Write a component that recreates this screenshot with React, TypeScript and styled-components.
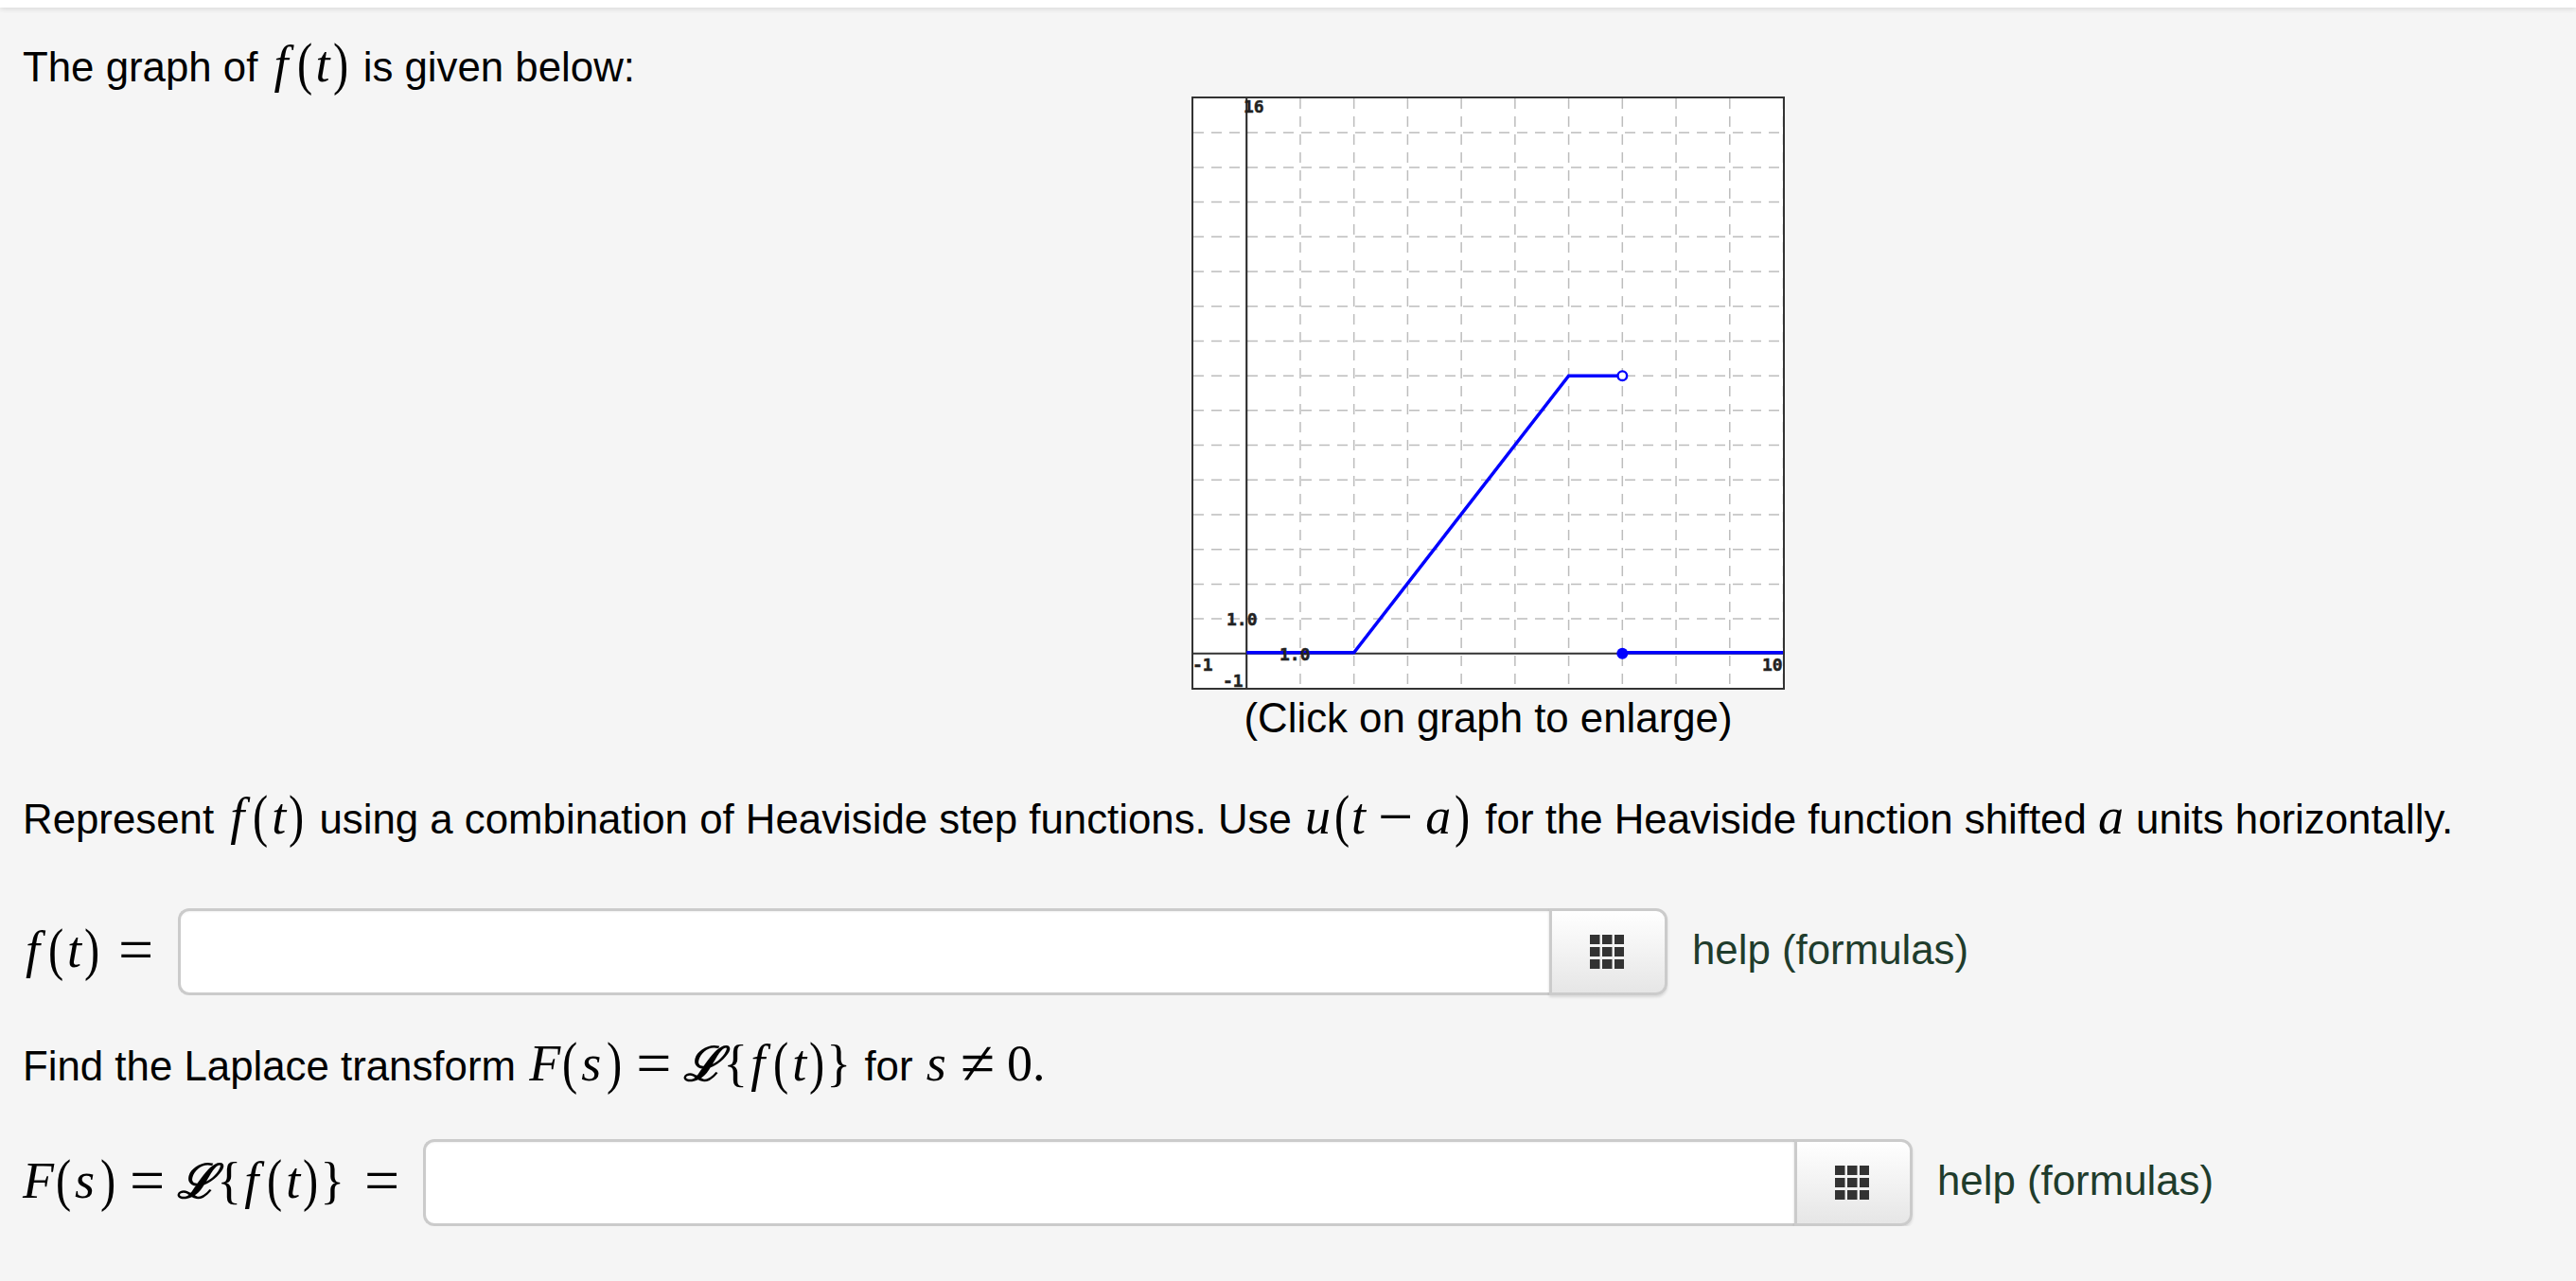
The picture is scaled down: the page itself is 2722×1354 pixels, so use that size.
import React from "react";
import styled, { createGlobalStyle } from "styled-components";

const Global = createGlobalStyle`
  html, body { margin: 0; padding: 0; background: #f5f5f5; }
  body { font-family: "Liberation Sans", Arial, sans-serif; color: #000; overflow: hidden; }
`;
const TopBar = styled.div`
  height: 8px;
  background: #fff;
  box-shadow: 0 2px 5px rgba(0, 0, 0, 0.1);
`;
const Page = styled.main`
  padding: 0 24px;
  font-size: 43.8px;
  line-height: 62px;
`;
const Line = styled.div<{ $top: number }>`
  margin-top: ${(p) => p.$top}px;
  white-space: nowrap;
  height: 62px;
`;
const Math = styled.span<{ $gap?: number }>`
  font-family: "Liberation Serif", "DejaVu Serif", serif;
  font-size: 54px;
  white-space: nowrap;
  margin: 0 ${(p) => p.$gap ?? 2}px;
`;
const Var = styled.i<{ $l?: number; $r?: number }>`
  font-style: italic;
  margin-left: ${(p) => p.$l ?? 0}px;
  margin-right: ${(p) => p.$r ?? 0}px;
`;
const Paren = styled.span`
  display: inline-block;
  margin: 0 1px;
  transform: scaleY(1.12) scaleX(0.9);
  font-weight: 400;
`;
const Brace = styled.span`
  display: inline-block;
`;
const Op = styled.span<{ $l?: number }>`
  font-size: 66px;
  line-height: 40px;
  vertical-align: -4px;
  margin: 0 13px 0 ${(p) => p.$l ?? 13}px;
`;
const Script = styled.span`
  font-family: "DejaVu Serif", serif;
  font-style: italic;
  font-weight: 700;
  font-size: 50px;
  line-height: 40px;
`;
const Figure = styled.figure`
  margin: 3px 0 0 1235px;
  width: 627px;
`;
const Caption = styled.figcaption`
  text-align: center;
  line-height: 62px;
  margin-top: -1px;
`;
const GraphSvg = styled.svg`
  display: block;
`;
const AnswerRow = styled.div<{ $top: number }>`
  display: flex;
  align-items: center;
  margin-top: ${(p) => p.$top}px;
  height: 92px;
`;
const Label = styled.div<{ $w: number }>`
  width: ${(p) => p.$w}px;
  flex: none;
  white-space: nowrap;
  margin-bottom: 2px;
`;
const InputGroup = styled.div`
  display: flex;
  width: 1574px;
  height: 92px;
  flex: none;
`;
const Field = styled.input`
  flex: 1;
  min-width: 0;
  box-sizing: border-box;
  height: 100%;
  background: #fff;
  border: 3px solid #cbcbcb;
  border-right-width: 0;
  border-radius: 12px 0 0 12px;
  box-shadow: inset 0 1px 2px rgba(0, 0, 0, 0.05);
  outline: none;
`;
const PickerButton = styled.button`
  width: 125px;
  box-sizing: border-box;
  height: 100%;
  flex: none;
  display: flex;
  align-items: center;
  justify-content: center;
  padding: 0 4px 0 0;
  border: 3px solid #cbcbcb;
  border-radius: 0 12px 12px 0;
  background: linear-gradient(#fff, #e6e6e6);
  box-shadow: 0 2px 3px rgba(0, 0, 0, 0.12);
`;
const Help = styled.a`
  margin: 0 0 4px 26px;
  color: #1f3c2c;
  white-space: nowrap;
`;

const Icon = () => (
  <svg width="36" height="36" viewBox="0 0 36 36" fill="#333">
    {[0, 13, 26].map((y) =>
      [0, 13, 26].map((x) => <rect key={`${x}-${y}`} x={x} y={y} width="10.5" height="10" />)
    )}
  </svg>
);

const W = 624;
const dx = W / 11;
const dy = W / 17;
const px = (t: number) => (t + 1) * dx + 1.5;
const py = (v: number) => (16 - v) * dy + 1.5;

const Graph = () => (
  <GraphSvg width="627" height="627" viewBox="0 0 627 627">
    <rect x="1.5" y="1.5" width={W} height={W} fill="#fff" />
    <g stroke="#bdbdbd" strokeWidth="1.5" strokeDasharray="11 8">
      {Array.from({ length: 10 }, (_, i) => i + 1).map((t) => (
        <line key={t} x1={px(t)} x2={px(t)} y1="2" y2={W} />
      ))}
      {Array.from({ length: 15 }, (_, i) => i + 1).map((v) => (
        <line key={v} x1="2" x2={W} y1={py(v)} y2={py(v)} />
      ))}
    </g>
    <line x1={px(0)} x2={px(0)} y1="1" y2={W + 2} stroke="#222" strokeWidth="2" />
    <line x1="1" x2={W + 2} y1={py(0)} y2={py(0)} stroke="#333" strokeWidth="2" />
    <rect x="1" y="1" width={W + 1} height={W + 1} fill="none" stroke="#333" strokeWidth="2" />
    <path
      d={`M${px(0)} ${py(0) - 1}H${px(2)}L${px(6)} ${py(8)}H${px(7)}`}
      fill="none"
      stroke="#0000ff"
      strokeWidth="3.5"
    />
    <path d={`M${px(7)} ${py(0) - 1}H${W + 1}`} fill="none" stroke="#0000ff" strokeWidth="3.5" />
    <circle cx={px(7)} cy={py(0)} r="6" fill="#0000ff" />
    <circle cx={px(7)} cy={py(8)} r="4.8" fill="#fff" stroke="#0000ff" strokeWidth="2.4" />
    <g
      fontFamily="'DejaVu Sans Mono', monospace"
      fontWeight="700"
      fontSize="18"
      fill="#222"
      stroke="#222"
      strokeWidth="0.5"
    >
      <text x="55" y="17">16</text>
      <text x="37" y="559">1.0</text>
      <text x="93" y="596">1.0</text>
      <text x="1" y="607">-1</text>
      <text x="33" y="624">-1</text>
      <text x="603" y="607">10</text>
    </g>
  </GraphSvg>
);

const Ft = () => (
  <>
    <Var $l={3} $r={7}>f</Var>
    <Paren>(</Paren>
    <Var $l={2} $r={1}>t</Var>
    <Paren>)</Paren>
  </>
);

const Fs = () => (
  <>
    <Var $r={0}>F</Var>
    <Paren>(</Paren>
    <Var $l={2} $r={4}>s</Var>
    <Paren>)</Paren>
  </>
);

export default function App() {
  return (
    <>
      <Global />
      <TopBar />
      <Page>
        <Line $top={29}>
          The graph of <Math><Ft /></Math> is given below:
        </Line>
        <Figure>
          <Graph />
          <Caption>(Click on graph to enlarge)</Caption>
        </Figure>
        <Line $top={42}>
          Represent <Math><Ft /></Math> using a combination of Heaviside step functions. Use{" "}
          <Math>
            <Var $r={2}>u</Var>
            <Paren>(</Paren>
            <Var>t</Var>
            <Op>−</Op>
            <Var $r={2}>a</Var>
            <Paren>)</Paren>
          </Math>{" "}
          for the Heaviside function shifted <Math $gap={0}><Var $r={1}>a</Var></Math> units horizontally.
        </Line>
        <AnswerRow $top={66}>
          <Label $w={164}>
            <Math $gap={0}>
              <Ft />
              <Op $l={18}>=</Op>
            </Math>
          </Label>
          <InputGroup>
            <Field aria-label="f(t)" />
            <PickerButton aria-label="equation editor"><Icon /></PickerButton>
          </InputGroup>
          <Help>help (formulas)</Help>
        </AnswerRow>
        <Line $top={41}>
          Find the Laplace transform{" "}
          <Math>
            <Fs />
            <Op>=</Op>
            <Script>ℒ</Script>
            <Brace>{"{"}</Brace>
            <Ft />
            <Brace>{"}"}</Brace>
          </Math>{" "}
          for{" "}
          <Math>
            <Var $r={2}>s</Var>
            <Op>≠</Op>0.
          </Math>
        </Line>
        <AnswerRow $top={49}>
          <Label $w={423}>
            <Math $gap={0}>
              <Fs />
              <Op>=</Op>
              <Script>ℒ</Script>
              <Brace>{"{"}</Brace>
              <Ft />
              <Brace>{"}"}</Brace>
              <Op $l={21}>=</Op>
            </Math>
          </Label>
          <InputGroup>
            <Field aria-label="F(s)" />
            <PickerButton aria-label="equation editor"><Icon /></PickerButton>
          </InputGroup>
          <Help>help (formulas)</Help>
        </AnswerRow>
      </Page>
    </>
  );
}
